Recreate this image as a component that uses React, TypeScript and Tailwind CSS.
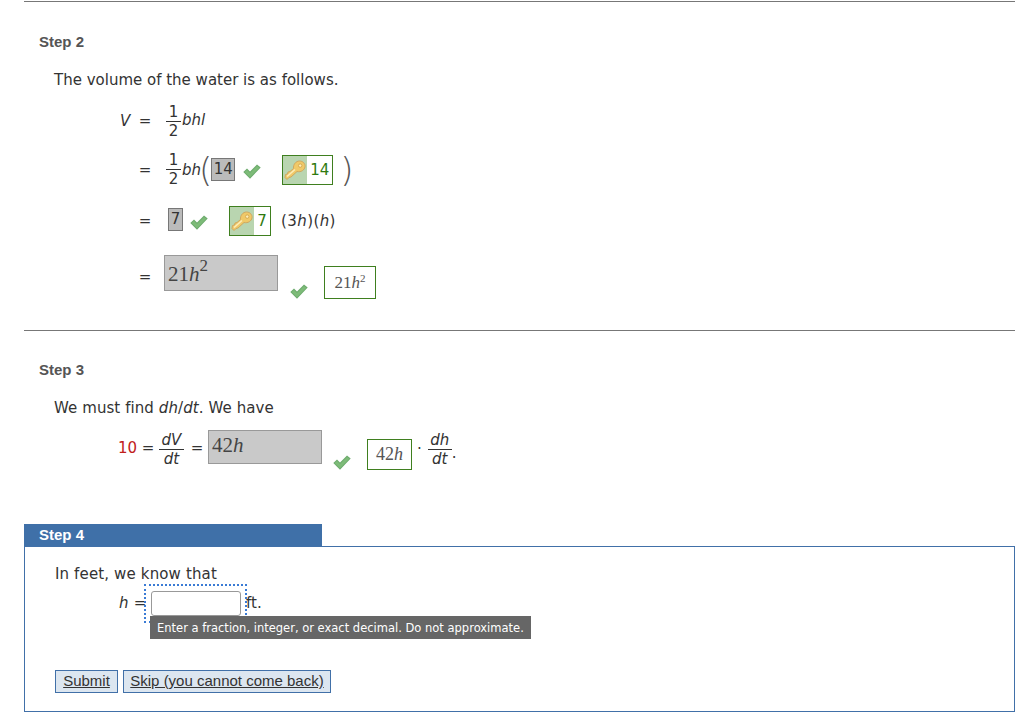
import React from "react";

const Check = ({ className = "" }: { className?: string }) => (
  <svg width="18" height="15" viewBox="0 0 18 15" className={`shrink-0 ${className}`}>
    <path d="M0.3 8 L4 4.6 L7 7.6 L14 0.5 L17.7 3.6 L7 14.7 Z" fill="#6dab6d" />
    <path d="M1.6 8 L4 5.9 L7 8.9 L14 1.9 L16.3 3.7 L7 13.2 Z" fill="#7dbb78" />
  </svg>
);

const Key = () => (
  <svg width="22" height="22" viewBox="0 0 22 22" className="shrink-0">
    <path
      d="M1 18.5 L1.5 15.5 L3.5 15 L4 13 L6 12.5 L9.5 9.5 C9 5.5 12 2 15.5 2 C19 2 21.5 4.8 21 7.8 C20.5 11 17 13.5 13 12.5 L7 18 L5 18.5 L3 20.5 Z"
      fill="#f0c968"
      stroke="#cfa860"
      strokeWidth="1"
    />
    <path d="M3 17.5 L11 10.5" stroke="#fcecb8" strokeWidth="1.6" fill="none" />
    <circle cx="16.2" cy="6.6" r="1.7" fill="#fdeeb8" stroke="#c89c44" strokeWidth="0.7" />
  </svg>
);

const Frac = ({ top, bottom, italic = false, w = "w-[15px]" }: { top: string; bottom: string; italic?: boolean; w?: string }) => (
  <span className={`inline-flex flex-col items-center leading-[15px] ${w} ${italic ? "italic" : ""}`}>
    <span className="w-full border-b border-[#333] pb-[1px] text-center">{top}</span>
    <span className="pt-[2px]">{bottom}</span>
  </span>
);

const KeyBox = ({ v, w }: { v: string; w: string }) => (
  <span className={`flex h-[30px] items-stretch border border-[#3f7f1f] bg-white text-[#2f7a10] ${w}`}>
    <span className="flex w-[24px] shrink-0 items-center justify-center bg-[#b9d5b0]">
      <Key />
    </span>
    <span className="flex flex-1 items-center justify-center">{v}</span>
  </span>
);

const Serif = ({ children, className = "" }: { children: React.ReactNode; className?: string }) => (
  <span className={`font-['Liberation_Serif',serif] ${className}`}>{children}</span>
);

const I = ({ children }: { children: React.ReactNode }) => <span className="italic">{children}</span>;

const Label = ({ children }: { children: React.ReactNode }) => (
  <div className="font-['Liberation_Sans',Arial,sans-serif] text-[15px] font-bold text-[#555]">{children}</div>
);

const Eq = ({ className = "" }: { className?: string }) => (
  <span className={`flex w-[10px] shrink-0 justify-center ${className}`}>=</span>
);

export default function App() {
  return (
    <div className="h-[725px] w-[1024px] overflow-hidden bg-white pl-[24px] pt-[1px] font-['DejaVu_Sans',Verdana,sans-serif] text-[15px] text-[#333]">
      <div className="h-[2px] w-[991px] border-t border-[#777]" />

      <div className="ml-[15px] mt-[31px] leading-[16px]">
        <Label>Step 2</Label>
      </div>
      <p className="ml-[30px] mt-[21px] leading-[18px]">The volume of the water is as follows.</p>

      <div className="ml-[96px] mt-[17px] flex h-[31px] items-center">
        <span className="w-[20px] italic">V</span>
        <Eq />
        <span className="ml-[16px] flex items-center">
          <Frac top="1" bottom="2" />
          <span className="mb-[3px] ml-[1px] italic">bhl</span>
        </span>
      </div>

      <div className="ml-[116px] mt-[17px] flex h-[32px] items-center">
        <Eq />
        <span className="ml-[16px] flex items-center">
          <Frac top="1" bottom="2" />
          <span className="ml-[1px] italic">bh</span>
          <span className="-ml-[2px] text-[34px] font-extralight leading-[30px] text-[#555]">(</span>
        </span>
        <span className="-ml-[1px] mb-[1px] flex h-[23px] w-[24px] items-center justify-center border border-[#777] bg-[#bbb]">14</span>
        <Check className="ml-[8px] mt-[3px]" />
        <span className="ml-[21px]">
          <KeyBox v="14" w="w-[51px]" />
        </span>
        <span className="ml-[7px] text-[34px] font-extralight leading-[30px] text-[#555]">)</span>
      </div>

      <div className="ml-[116px] mt-[20px] flex h-[30px] items-center">
        <Eq />
        <span className="mb-[4px] ml-[18px] flex h-[23px] w-[15px] items-center justify-center border border-[#777] bg-[#bbb]">7</span>
        <Check className="ml-[7px] mt-[3px]" />
        <span className="ml-[21px]">
          <KeyBox v="7" w="w-[42px]" />
        </span>
        <span className="ml-[10px] tracking-[0.4px]">
          (3<I>h</I>)(<I>h</I>)
        </span>
      </div>

      <div className="ml-[116px] mt-[19px] flex h-[44px] items-start">
        <Eq className="mt-[11px]" />
        <span className="ml-[14px] flex h-[36px] w-[114px] items-center border border-[#999] bg-[#c9c9c9] pl-[3px] pt-[2px] text-[#444]">
          <Serif className="text-[21px] leading-[24px]">
            21<I>h</I>
            <sup className="relative -top-[2px] align-super text-[17px] leading-[0]">2</sup>
          </Serif>
        </span>
        <Check className="ml-[12px] mt-[29px]" />
        <span className="ml-[16px] mt-[11px] flex h-[33px] w-[52px] items-center justify-center border border-[#3f7f1f]">
          <Serif className="text-[17px] text-[#555]">
            21<I>h</I>
            <sup className="text-[11px] leading-[0]">2</sup>
          </Serif>
        </span>
      </div>

      <div className="mt-[31px] h-[2px] w-[991px] border-t border-[#777]" />

      <div className="ml-[15px] mt-[30px] leading-[16px]">
        <Label>Step 3</Label>
      </div>
      <p className="ml-[30px] mt-[21px] leading-[18px] tracking-[0.08px]">
        We must find <I>dh</I>/<I>dt</I>. We have
      </p>

      <div className="ml-[94px] mt-[13px] flex h-[41px] items-start">
        <span className="mt-[7px] w-[18px] text-[#c0201a]">10</span>
        <Eq className="ml-[7px] mt-[7px]" />
        <span className="ml-[6px] mt-[3px] flex">
          <Frac top="dV" bottom="dt" italic w="w-[25px]" />
        </span>
        <Eq className="ml-[8px] mt-[7px]" />
        <span className="ml-[6px] flex h-[34px] w-[114px] items-center border border-[#999] bg-[#c9c9c9] pb-[2px] pl-[3px] text-[#444]">
          <Serif className="text-[21px]">
            42<I>h</I>
          </Serif>
        </span>
        <Check className="ml-[11px] mt-[25px]" />
        <span className="ml-[16px] mt-[9px] flex h-[31px] w-[45px] items-center justify-center border border-[#3f7f1f]">
          <Serif className="text-[18px] text-[#555]">
            42<I>h</I>
          </Serif>
        </span>
        <span className="ml-[5px] mt-[12px] leading-[14px]">·</span>
        <span className="ml-[6px] mt-[3px] flex items-center">
          <Frac top="dh" bottom="dt" italic w="w-[24px]" />
          <span className="mt-[6px]">.</span>
        </span>
      </div>

      <div className="mt-[53px] flex h-[22px] w-[298px] items-center bg-[#3f70a8] pl-[15px] font-['Liberation_Sans',Arial,sans-serif] text-[15px] font-bold text-white">
        Step 4
      </div>
      <div className="h-[166px] w-[991px] border border-[#4170a8] pl-[30px]">
        <p className="mt-[18px] leading-[18px] tracking-[0.14px]">In feet, we know that</p>
        <div className="relative ml-[64px] mt-[8px] flex h-[25px] items-center">
          <span className="w-[16px] italic">h</span>
          <Eq />
          <span className="ml-[6px] h-[25px] w-[90px] rounded-[3px] border border-[#999] bg-white" />
          <span className="ml-[5px]">ft.</span>
          <span className="absolute -top-[7px] left-[25px] h-[39px] w-[103px] border-2 border-dotted border-[#3a7bd5]" />
          <div className="absolute left-[31px] top-[25px] flex h-[23px] w-[381px] items-center bg-[#666] pl-[7px] pt-[2px] text-[11.5px] text-white">
            Enter a fraction, integer, or exact decimal. Do not approximate.
          </div>
        </div>
        <div className="mt-[54px] flex gap-[5px] font-['Liberation_Sans',Arial,sans-serif] text-[15px] text-[#333]">
          <span className="flex h-[23px] w-[63px] items-center justify-center border border-[#4170a8] bg-[#dce6f0] underline">Submit</span>
          <span className="flex h-[23px] w-[208px] items-center justify-center border border-[#4170a8] bg-[#dce6f0] underline">Skip (you cannot come back)</span>
        </div>
      </div>
    </div>
  );
}
